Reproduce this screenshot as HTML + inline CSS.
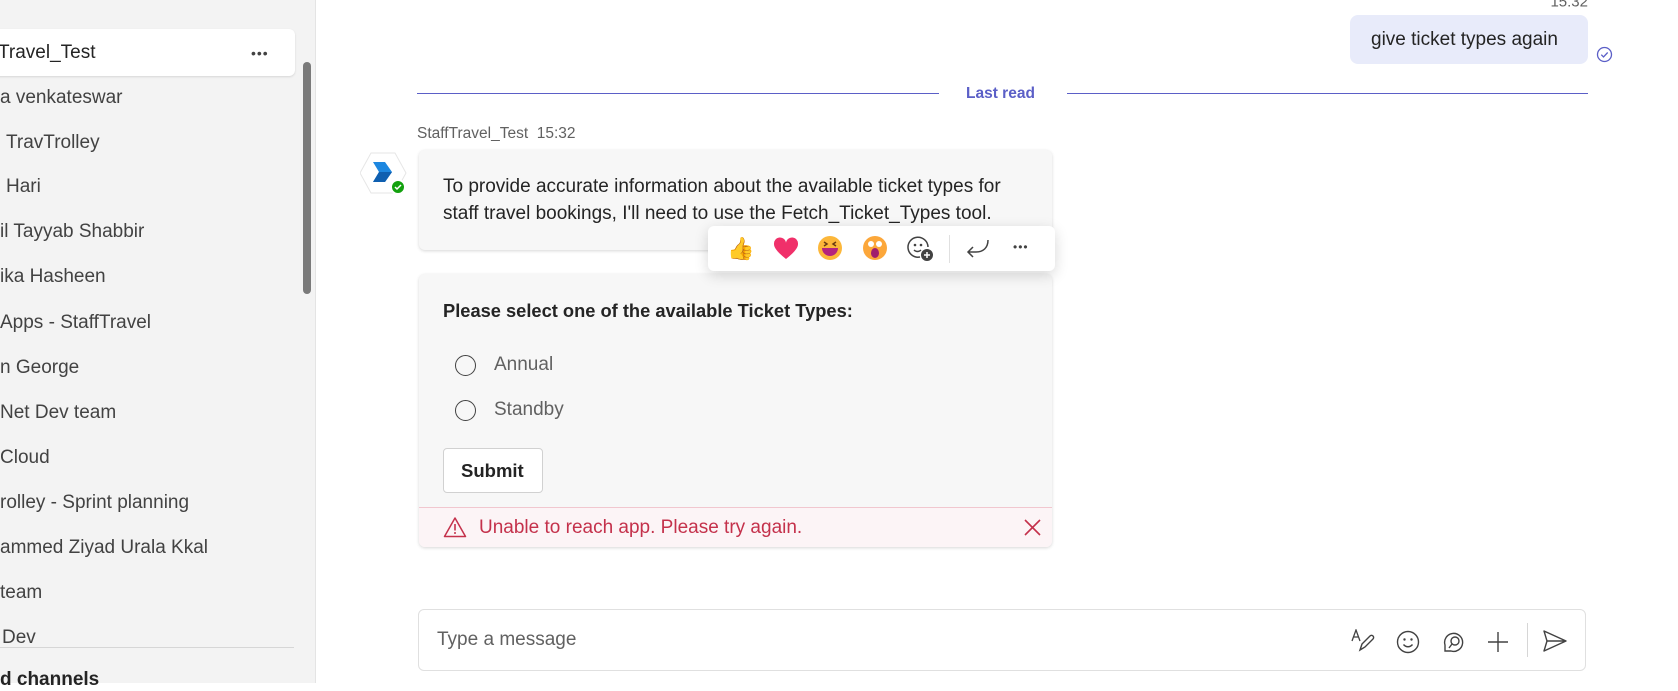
<!DOCTYPE html>
<html><head><meta charset="utf-8"><style>
*{box-sizing:border-box;margin:0;padding:0}
body{width:1678px;height:683px;overflow:hidden;background:#fff;font-family:"Liberation Sans",sans-serif;color:#242424;position:relative}
.side{position:absolute;left:0;top:0;width:316px;height:683px;background:#f3f3f3;border-right:1px solid #e4e4e4}
.it{position:absolute;left:0;font-size:19px;color:#424242;white-space:nowrap;transform:translateY(-50%)}
.sel{position:absolute;left:-10px;top:29px;width:305px;height:47px;background:#fff;border-radius:6px;box-shadow:0 1px 2px rgba(0,0,0,.12)}
.scroll{position:absolute;left:303px;top:62px;width:8px;height:232px;background:#7a7a7a;border-radius:4px}
.abs{position:absolute}
.card{position:absolute;left:419px;width:633px;background:#f7f7f7;border-radius:6px;box-shadow:0 1px 3px rgba(0,0,0,.16)}
.t{position:absolute;white-space:nowrap;transform:translateY(-50%)}
</style></head><body>
<div class="side">
<div class="sel"></div>
<div class="it" style="top:53px;left:-2px;color:#242424">Travel_Test</div>
<div class="abs" style="left:251px;top:45px;font-size:14px;letter-spacing:1px;color:#424242">•••</div>
<div class="it" style="top:98px">a venkateswar</div>
<div class="it" style="top:143px;left:6px">TravTrolley</div>
<div class="it" style="top:187px;left:6px">Hari</div>
<div class="it" style="top:232px">il Tayyab Shabbir</div>
<div class="it" style="top:277px">ika Hasheen</div>
<div class="it" style="top:323px">Apps - StaffTravel</div>
<div class="it" style="top:368px">n George</div>
<div class="it" style="top:413px">Net Dev team</div>
<div class="it" style="top:458px">Cloud</div>
<div class="it" style="top:503px">rolley - Sprint planning</div>
<div class="it" style="top:548px">ammed Ziyad Urala Kkal</div>
<div class="it" style="top:593px">team</div>
<div class="it" style="top:638px;left:2px">Dev</div>
<div class="abs" style="left:0;top:647px;width:294px;height:1px;background:#d6d6d6"></div>
<div class="it" style="top:680px;font-weight:bold;color:#242424">d channels</div>
<div class="scroll"></div>
</div>

<div class="t" style="right:90px;top:2px;font-size:15px;color:#616161">15:32</div>
<div class="abs" style="left:1350px;top:15px;width:238px;height:49px;background:#e8ebfa;border-radius:8px"></div>
<div class="t" style="left:1371px;top:40px;font-size:19px">give ticket types again</div>
<svg class="abs" style="left:1596px;top:46px" width="17" height="17" viewBox="0 0 17 17"><circle cx="8.5" cy="8.5" r="7" fill="none" stroke="#5b5fc7" stroke-width="1.3"/><path d="M5.3 8.7l2.2 2.2 4.2-4.4" fill="none" stroke="#5b5fc7" stroke-width="1.3"/></svg>

<div class="abs" style="left:417px;top:93px;width:522px;height:1px;background:#5b5fc7"></div>
<div class="abs" style="left:1067px;top:93px;width:521px;height:1px;background:#5b5fc7"></div>
<div class="t" style="left:966px;top:94px;font-size:15.5px;font-weight:bold;color:#5b5fc7">Last read</div>

<div class="t" style="left:417px;top:134px;font-size:15.5px;color:#616161">StaffTravel_Test&nbsp;&nbsp;15:32</div>
<svg class="abs" style="left:360px;top:151px" width="50" height="48" viewBox="0 0 50 48"><polygon points="11,2 35,2 46,22 35,42 11,42 0,22" fill="#fff" stroke="#e6e6e6"/><path d="M13 11h12l7 10-7 10H13l6-10z" fill="#1d87e0"/><path d="M19 21l13 0-7 10H13z" fill="#0f5fb0"/><circle cx="38" cy="36" r="7" fill="#13a10e" stroke="#fff" stroke-width="2"/><path d="M35 36l2 2 4-4" stroke="#fff" stroke-width="1.5" fill="none"/></svg>

<div class="card" style="top:150px;height:100px"></div>
<div class="t" style="left:443px;top:187px;font-size:19px">To provide accurate information about the available ticket types for</div>
<div class="t" style="left:443px;top:214px;font-size:19px">staff travel bookings, I'll need to use the Fetch_Ticket_Types tool.</div>

<div class="card" style="top:274px;height:273px;overflow:hidden">
<div class="abs" style="left:0;top:233px;width:633px;height:40px;background:#fcf4f6;border-top:1px solid #f1c7cf"></div>
</div>
<div class="t" style="left:443px;top:311px;font-size:18.3px;font-weight:bold">Please select one of the available Ticket Types:</div>
<div class="abs" style="left:455px;top:355px;width:21px;height:21px;border:1.5px solid #424242;border-radius:50%"></div>
<div class="t" style="left:494px;top:365px;font-size:19px;color:#616161">Annual</div>
<div class="abs" style="left:455px;top:400px;width:21px;height:21px;border:1.5px solid #424242;border-radius:50%"></div>
<div class="t" style="left:494px;top:410px;font-size:19px;color:#616161">Standby</div>
<div class="abs" style="left:443px;top:448px;width:100px;height:45px;background:#fff;border:1px solid #d1d1d1;border-radius:4px"></div>
<div class="t" style="left:461px;top:471px;font-size:18.5px;font-weight:bold">Submit</div>
<svg class="abs" style="left:443px;top:516px" width="24" height="22" viewBox="0 0 24 22"><path d="M12 2L1.5 20.5h21z" fill="none" stroke="#c4314b" stroke-width="1.5" stroke-linejoin="round"/><path d="M12 8v6.5" stroke="#c4314b" stroke-width="1.6"/><circle cx="12" cy="17" r="1" fill="#c4314b"/></svg>
<div class="t" style="left:479px;top:528px;font-size:19px;color:#c4314b">Unable to reach app. Please try again.</div>
<svg class="abs" style="left:1024px;top:519px" width="17" height="17" viewBox="0 0 17 17"><path d="M1 1l15 15M16 1L1 16" stroke="#c4314b" stroke-width="1.6"/></svg>

<div class="abs" style="left:708px;top:226px;width:347px;height:45px;background:#fff;border-radius:6px;box-shadow:0 4px 14px rgba(0,0,0,.16)"></div>
<div class="t" style="left:727px;top:249px;font-size:22px;color:#f5a623">👍</div>
<svg class="abs" style="left:773px;top:237px" width="26" height="24" viewBox="0 0 26 24"><path d="M13 22C3 14 1 10 1 7a6 6 0 0 1 12-1 6 6 0 0 1 12 1c0 3-2 7-12 15z" fill="#f0306a"/></svg>
<svg class="abs" style="left:817px;top:235px" width="26" height="26" viewBox="0 0 26 26"><circle cx="13" cy="13" r="12" fill="#fcb73a"/><path d="M5 13h16a8 8 0 0 1-16 0z" fill="#b4237e"/><path d="M7 7l3 2-3 2M19 7l-3 2 3 2" stroke="#6b3b12" stroke-width="1.5" fill="none"/></svg>
<svg class="abs" style="left:862px;top:235px" width="26" height="26" viewBox="0 0 26 26"><circle cx="13" cy="13" r="12" fill="#fca73a"/><circle cx="9" cy="9" r="3" fill="#fff"/><circle cx="17" cy="9" r="3" fill="#fff"/><ellipse cx="13" cy="18" rx="4" ry="5" fill="#a01e6d"/></svg>
<svg class="abs" style="left:907px;top:235px" width="27" height="27" viewBox="0 0 27 27"><path d="M21 12A10 10 0 1 0 13 22" fill="none" stroke="#424242" stroke-width="1.5"/><circle cx="8" cy="10" r="1.3" fill="#424242"/><circle cx="14" cy="10" r="1.3" fill="#424242"/><path d="M7 15c2 2 5 2 7 0" stroke="#424242" stroke-width="1.4" fill="none"/><circle cx="20" cy="20" r="6" fill="#424242"/><path d="M20 17v6M17 20h6" stroke="#fff" stroke-width="1.5"/></svg>
<div class="abs" style="left:949px;top:235px;width:1px;height:28px;background:#e0e0e0"></div>
<svg class="abs" style="left:965px;top:238px" width="26" height="22" viewBox="0 0 26 22"><path d="M23 2c0 8-5 12-12 12H3M8 9l-5 5 5 5" fill="none" stroke="#424242" stroke-width="1.5"/></svg>
<div class="abs" style="left:1013px;top:240px;font-size:12px;letter-spacing:1px;color:#424242">•••</div>

<div class="abs" style="left:418px;top:609px;width:1168px;height:62px;border:1px solid #e0e0e0;border-radius:6px;background:#fff"></div>
<div class="t" style="left:437px;top:640px;font-size:19px;color:#616161">Type a message</div>
<svg class="abs" style="left:1351px;top:629px" width="26" height="24" viewBox="0 0 26 24"><path d="M1 12L5 1l4 11M2.5 8h5" fill="none" stroke="#424242" stroke-width="1.3"/><path d="M9 21l2-6 8-8a2 2 0 0 1 3 3l-8 8z" fill="none" stroke="#424242" stroke-width="1.4"/></svg>
<svg class="abs" style="left:1396px;top:630px" width="24" height="24" viewBox="0 0 24 24"><circle cx="12" cy="12" r="10.5" fill="none" stroke="#424242" stroke-width="1.4"/><circle cx="8.5" cy="9.5" r="1.2" fill="#424242"/><circle cx="15.5" cy="9.5" r="1.2" fill="#424242"/><path d="M7.5 14.5c2.5 3 6.5 3 9 0" fill="none" stroke="#424242" stroke-width="1.4"/></svg>
<svg class="abs" style="left:1442px;top:630px" width="24" height="24" viewBox="0 0 24 24"><path d="M3 21v-6A9 9 0 1 1 9 21z" fill="none" stroke="#424242" stroke-width="1.4"/><circle cx="13" cy="11" r="4" fill="none" stroke="#424242" stroke-width="1.4"/><path d="M10 14l-3 4" stroke="#424242" stroke-width="1.4"/></svg>
<svg class="abs" style="left:1486px;top:630px" width="24" height="24" viewBox="0 0 24 24"><path d="M12 2v20M2 12h20" stroke="#424242" stroke-width="1.4"/></svg>
<div class="abs" style="left:1527px;top:623px;width:1px;height:34px;background:#d6d6d6"></div>
<svg class="abs" style="left:1542px;top:629px" width="26" height="24" viewBox="0 0 26 24"><path d="M2 2l22 10L2 22l3-10z M5 12h19" fill="none" stroke="#424242" stroke-width="1.4" stroke-linejoin="round"/></svg>
</body></html>
